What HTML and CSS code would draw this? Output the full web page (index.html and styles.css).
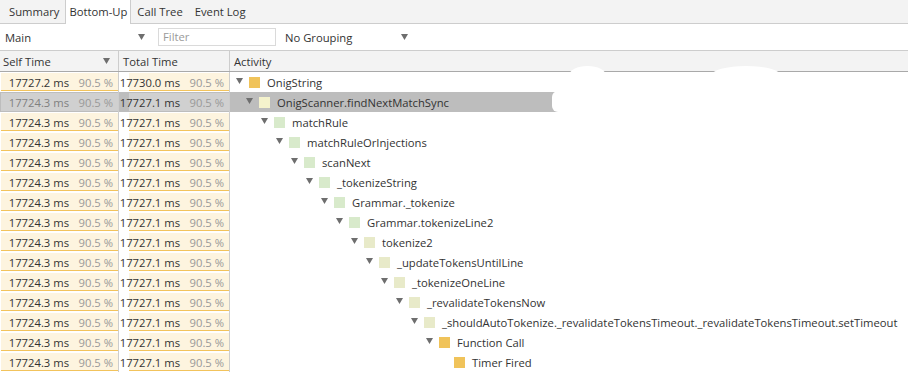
FILE: index.html
```html
<!DOCTYPE html>
<html>
<head>
<meta charset="utf-8">
<link rel="stylesheet" href="styles.css">
</head>
<body>
<div class="app">
  <div class="tabs">
    <div class="tab">Summary</div>
    <div class="tab active">Bottom-Up</div>
    <div class="tab">Call Tree</div>
    <div class="tab">Event Log</div>
  </div>
  <div class="toolbar">
    <div class="select sel-main"><span>Main</span><span class="dd"></span></div>
    <div class="filter">Filter</div>
    <div class="select sel-group"><span>No Grouping</span><span class="dd"></span></div>
  </div>
  <div class="grid">
    <div class="row head">
      <div class="hcell self">Self Time<span class="dd sort"></span></div>
      <div class="hcell total">Total Time</div>
      <div class="hcell act">Activity</div>
    </div>

    <div class="row">
      <div class="cell self"><div class="bar" style="width:99%"></div><span class="ms">17727.2 ms</span><span class="pct">90.5 %</span></div>
      <div class="cell total"><div class="bar" style="width:91%"></div><span class="ms">17730.0 ms</span><span class="pct">90.5 %</span></div>
      <div class="cell act l0"><span class="tw"></span><span class="sq c-or"></span>OnigString</div>
    </div>
    <div class="row selected">
      <div class="cell self"><div class="bar" style="width:99%"></div><span class="ms">17724.3 ms</span><span class="pct">90.5 %</span></div>
      <div class="cell total"><div class="bar" style="width:91%"></div><span class="ms">17727.1 ms</span><span class="pct">90.5 %</span></div>
      <div class="cell act l1"><span class="tw"></span><span class="sq c-py"></span>OnigScanner.findNextMatchSync</div>
    </div>
    <div class="row">
      <div class="cell self"><div class="bar" style="width:99%"></div><span class="ms">17724.3 ms</span><span class="pct">90.5 %</span></div>
      <div class="cell total"><div class="bar" style="width:91%"></div><span class="ms">17727.1 ms</span><span class="pct">90.5 %</span></div>
      <div class="cell act l2"><span class="tw"></span><span class="sq c-gr"></span>matchRule</div>
    </div>
    <div class="row">
      <div class="cell self"><div class="bar" style="width:99%"></div><span class="ms">17724.3 ms</span><span class="pct">90.5 %</span></div>
      <div class="cell total"><div class="bar" style="width:91%"></div><span class="ms">17727.1 ms</span><span class="pct">90.5 %</span></div>
      <div class="cell act l3"><span class="tw"></span><span class="sq c-gr"></span>matchRuleOrInjections</div>
    </div>
    <div class="row">
      <div class="cell self"><div class="bar" style="width:99%"></div><span class="ms">17724.3 ms</span><span class="pct">90.5 %</span></div>
      <div class="cell total"><div class="bar" style="width:91%"></div><span class="ms">17727.1 ms</span><span class="pct">90.5 %</span></div>
      <div class="cell act l4"><span class="tw"></span><span class="sq c-gr"></span>scanNext</div>
    </div>
    <div class="row">
      <div class="cell self"><div class="bar" style="width:99%"></div><span class="ms">17724.3 ms</span><span class="pct">90.5 %</span></div>
      <div class="cell total"><div class="bar" style="width:91%"></div><span class="ms">17727.1 ms</span><span class="pct">90.5 %</span></div>
      <div class="cell act l5"><span class="tw"></span><span class="sq c-gr"></span>_tokenizeString</div>
    </div>
    <div class="row">
      <div class="cell self"><div class="bar" style="width:99%"></div><span class="ms">17724.3 ms</span><span class="pct">90.5 %</span></div>
      <div class="cell total"><div class="bar" style="width:91%"></div><span class="ms">17727.1 ms</span><span class="pct">90.5 %</span></div>
      <div class="cell act l6"><span class="tw"></span><span class="sq c-gr"></span>Grammar._tokenize</div>
    </div>
    <div class="row">
      <div class="cell self"><div class="bar" style="width:99%"></div><span class="ms">17724.3 ms</span><span class="pct">90.5 %</span></div>
      <div class="cell total"><div class="bar" style="width:91%"></div><span class="ms">17727.1 ms</span><span class="pct">90.5 %</span></div>
      <div class="cell act l7"><span class="tw"></span><span class="sq c-gr"></span>Grammar.tokenizeLine2</div>
    </div>
    <div class="row">
      <div class="cell self"><div class="bar" style="width:99%"></div><span class="ms">17724.3 ms</span><span class="pct">90.5 %</span></div>
      <div class="cell total"><div class="bar" style="width:91%"></div><span class="ms">17727.1 ms</span><span class="pct">90.5 %</span></div>
      <div class="cell act l8"><span class="tw"></span><span class="sq c-pl"></span>tokenize2</div>
    </div>
    <div class="row">
      <div class="cell self"><div class="bar" style="width:99%"></div><span class="ms">17724.3 ms</span><span class="pct">90.5 %</span></div>
      <div class="cell total"><div class="bar" style="width:91%"></div><span class="ms">17727.1 ms</span><span class="pct">90.5 %</span></div>
      <div class="cell act l9"><span class="tw"></span><span class="sq c-pl"></span>_updateTokensUntilLine</div>
    </div>
    <div class="row">
      <div class="cell self"><div class="bar" style="width:99%"></div><span class="ms">17724.3 ms</span><span class="pct">90.5 %</span></div>
      <div class="cell total"><div class="bar" style="width:91%"></div><span class="ms">17727.1 ms</span><span class="pct">90.5 %</span></div>
      <div class="cell act l10"><span class="tw"></span><span class="sq c-pl"></span>_tokenizeOneLine</div>
    </div>
    <div class="row">
      <div class="cell self"><div class="bar" style="width:99%"></div><span class="ms">17724.3 ms</span><span class="pct">90.5 %</span></div>
      <div class="cell total"><div class="bar" style="width:91%"></div><span class="ms">17727.1 ms</span><span class="pct">90.5 %</span></div>
      <div class="cell act l11"><span class="tw"></span><span class="sq c-pl"></span>_revalidateTokensNow</div>
    </div>
    <div class="row">
      <div class="cell self"><div class="bar" style="width:99%"></div><span class="ms">17724.3 ms</span><span class="pct">90.5 %</span></div>
      <div class="cell total"><div class="bar" style="width:91%"></div><span class="ms">17727.1 ms</span><span class="pct">90.5 %</span></div>
      <div class="cell act l12"><span class="tw"></span><span class="sq c-pl"></span>_shouldAutoTokenize._revalidateTokensTimeout._revalidateTokensTimeout.setTimeout</div>
    </div>
    <div class="row">
      <div class="cell self"><div class="bar" style="width:99%"></div><span class="ms">17724.3 ms</span><span class="pct">90.5 %</span></div>
      <div class="cell total"><div class="bar" style="width:91%"></div><span class="ms">17727.1 ms</span><span class="pct">90.5 %</span></div>
      <div class="cell act l13"><span class="tw"></span><span class="sq c-or"></span>Function Call</div>
    </div>
    <div class="row">
      <div class="cell self"><div class="bar" style="width:99%"></div><span class="ms">17724.3 ms</span><span class="pct">90.5 %</span></div>
      <div class="cell total"><div class="bar" style="width:91%"></div><span class="ms">17727.1 ms</span><span class="pct">90.5 %</span></div>
      <div class="cell act l14"><span class="tw leaf"></span><span class="sq c-or"></span>Timer Fired</div>
    </div>
  </div>
  <div class="redact">
    <div class="blob main"></div>
    <div class="blob bump1"></div>
    <div class="blob bump2"></div>
  </div>
</div>
</body>
</html>
```

FILE: styles.css
```css
html, body {
  margin: 0;
  padding: 0;
  background: #fff;
}
body {
  font-family: "Open Sans", "Noto Sans", sans-serif;
  font-size: 11.25px;
  color: #333;
}
.app {
  position: relative;
  width: 908px;
  height: 376px;
  overflow: hidden;
}
.tabs {
  display: flex;
  height: 23px;
  background: #f3f3f3;
  border-bottom: 1px solid #cdcdcd;
  padding-left: 3px;
}
.tab {
  line-height: 23px;
  padding: 0 6px;
  color: #333;
}
.tab.active {
  background: #fff;
  border-left: 1px solid #cdcdcd;
  border-right: 1px solid #cdcdcd;
  height: 24px;
  padding: 0 3px;
}
.toolbar {
  display: flex;
  align-items: center;
  height: 26px;
  border-bottom: 1px solid #cdcdcd;
}
.select {
  display: flex;
  align-items: center;
  justify-content: space-between;
  color: #333;
}
.sel-main {
  width: 140px;
  padding-left: 5px;
  margin-right: 13px;
}
.sel-group {
  width: 123px;
  padding-left: 9px;
}
.dd {
  width: 7px;
  height: 6px;
  background: #6e6e6e;
  clip-path: polygon(0 0, 100% 0, 50% 100%);
}
.filter {
  width: 112px;
  height: 16px;
  line-height: 16px;
  border: 1px solid #dadada;
  padding-left: 4px;
  color: #9a9a9a;
}
.grid {
  display: flex;
  flex-direction: column;
}
.row {
  display: grid;
  grid-template-columns: 119px 111px 1fr;
  height: 20px;
}
.row.head {
  height: 20px;
  background: #f3f3f3;
  border-bottom: 1px solid #a9a9a9;
}
.hcell {
  display: flex;
  align-items: center;
  padding-left: 3px;
  border-right: 1px solid #cdcdcd;
}
.hcell.total {
  padding-left: 4px;
}
.hcell.act {
  border-right: none;
  padding-left: 4px;
}
.sort {
  margin-left: auto;
  margin-right: 8px;
}
.cell {
  position: relative;
  display: flex;
  align-items: center;
  border-right: 1px solid #cdcdcd;
  white-space: nowrap;
}
.cell.self, .cell.total {
  justify-content: flex-end;
  padding-right: 5px;
}
.bar {
  position: absolute;
  right: 0;
  top: 1px;
  height: 18px;
  background: #fdf4df;
  border-bottom: 1px solid #f2c35c;
  box-sizing: border-box;
}
.ms, .pct {
  position: relative;
}
.ms {
  color: #333;
}
.pct {
  width: 44px;
  text-align: right;
  color: #999;
}
.cell.act {
  border-right: none;
  padding-left: 6px;
}
.tw {
  width: 13px;
  height: 6px;
  flex: none;
  position: relative;
  top: -1px;
}
.tw::before {
  content: "";
  display: block;
  width: 7px;
  height: 6px;
  background: #6e6e6e;
  clip-path: polygon(0 0, 100% 0, 50% 100%);
}
.tw.leaf::before {
  display: none;
}
.sq {
  width: 11px;
  height: 11px;
  flex: none;
  margin-right: 7px;
}
.c-or { background: #f0c35a; }
.c-py { background: #f4f2cc; }
.c-gr { background: #d8eacb; }
.c-pl { background: #e8eac9; }

.cell.act.l1 { padding-left: 16px; }
.cell.act.l2 { padding-left: 31px; }
.cell.act.l3 { padding-left: 46px; }
.cell.act.l4 { padding-left: 61px; }
.cell.act.l5 { padding-left: 76px; }
.cell.act.l6 { padding-left: 91px; }
.cell.act.l7 { padding-left: 106px; }
.cell.act.l8 { padding-left: 121px; }
.cell.act.l9 { padding-left: 136px; }
.cell.act.l10 { padding-left: 151px; }
.cell.act.l11 { padding-left: 166px; }
.cell.act.l12 { padding-left: 181px; }
.cell.act.l13 { padding-left: 196px; }
.cell.act.l14 { padding-left: 211px; }

.row.selected {
  background: #bdbdbd;
}
.row.selected .bar {
  background: #d0d0d0;
  border-bottom: none;
}
.row.selected .self .ms {
  color: #808080;
}
.row.selected .self .pct {
  color: #999;
}

.redact {
  position: absolute;
  inset: 0;
  pointer-events: none;
}
.blob {
  position: absolute;
  background: #fff;
}
.blob.main {
  left: 552px;
  top: 91px;
  width: 360px;
  height: 21px;
  border-radius: 6px 0 0 6px;
}
.blob.bump1 {
  left: 569px;
  top: 66px;
  width: 37px;
  height: 14px;
  border-radius: 50% 50% 0 0 / 70% 70% 0 0;
}
.blob.bump2 {
  left: 711px;
  top: 66px;
  width: 70px;
  height: 14px;
  border-radius: 50% 50% 0 0 / 70% 70% 0 0;
}
```
